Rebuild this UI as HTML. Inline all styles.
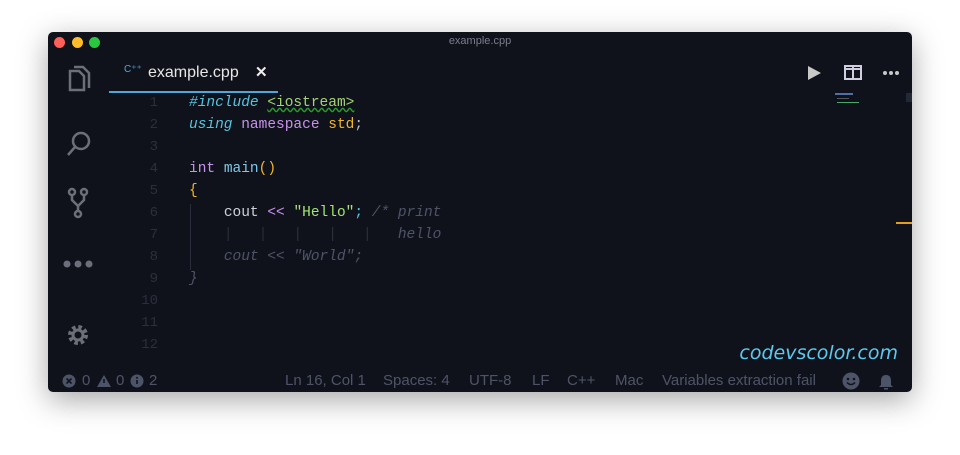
<!DOCTYPE html>
<html><head><meta charset="utf-8"><style>
body{margin:0;width:960px;height:455px;background:#fff;position:relative;overflow:hidden;font-family:"Liberation Sans",sans-serif}
.win{position:absolute;left:48px;top:32px;width:864px;height:360px;background:#10121b;border-radius:5px;box-shadow:0 8px 30px rgba(0,0,0,.35);overflow:hidden}
.dot{position:absolute;top:5px;width:11px;height:11px;border-radius:50%}
.title{position:absolute;top:3px;left:0;right:0;text-align:center;color:#7a7f8c;font-size:11px}
.code{position:absolute;left:141px;top:60px;font-family:"Liberation Mono",monospace;font-size:14.5px;line-height:22px;white-space:pre}
.ln{position:absolute;left:60px;width:50px;text-align:right;color:#2b2f3c;font-family:"Liberation Mono",monospace;font-size:14px;line-height:22px;top:60px;white-space:pre}
.sb{position:absolute;left:0;right:0;bottom:0;height:22px;color:#4e5468;font-size:15px;line-height:22px}
.sb span{position:absolute}
i{font-style:italic}
</style></head><body>
<div class="win">
<div class="dot" style="left:6px;background:#fe5f57"></div>
<div class="dot" style="left:24px;background:#febc2e"></div>
<div class="dot" style="left:41px;background:#28c840"></div>
<div class="title">example.cpp</div>
<svg style="position:absolute;left:14px;top:30px" width="36" height="300" fill="none" stroke="#6b6f7a" stroke-width="2.5">
<path d="M8 9h9l5 5v14H8z M12 5h9l6 6v15"/>
<circle cx="19" cy="79" r="8"/><path d="M13 85l-7 8"/>
<circle cx="10" cy="130" r="3"/><circle cx="22" cy="130" r="3"/><circle cx="16" cy="152" r="3"/><path d="M10 133v5l6 6 6-6v-5M16 144v5"/>
<g fill="#6b6f7a" stroke="none"><circle cx="5" cy="202" r="3.5"/><circle cx="16" cy="202" r="3.5"/><circle cx="27" cy="202" r="3.5"/></g>
<circle cx="16" cy="273" r="8" stroke-width="4" stroke-dasharray="3.5 2.8"/><circle cx="16" cy="273" r="5" stroke-width="3"/>
</svg>
<div style="position:absolute;left:76px;top:32px;color:#4fa6d9;font-size:10px">C⁺⁺</div>
<div style="position:absolute;left:100px;top:32px;color:#e6e6e6;font-size:16px">example.cpp</div>
<div style="position:absolute;left:207px;top:31px;color:#eee;font-size:15px;font-weight:bold">✕</div>
<div style="position:absolute;left:61px;top:59px;width:169px;height:2px;background:#4fa6d9"></div>
<svg style="position:absolute;left:756px;top:32px" width="100" height="18">
<path d="M4 2l13 7-13 7z" fill="#c8c8c8"/><rect x="41" y="2" width="16" height="13" fill="none" stroke="#cfcfe0" stroke-width="2"/><path d="M49 2v13M41 5h16" stroke="#cfcfe0" stroke-width="2"/>
<g fill="#c8c8c8"><circle cx="81" cy="9" r="2"/><circle cx="87" cy="9" r="2"/><circle cx="93" cy="9" r="2"/></g>
</svg>
<div style="position:absolute;left:787px;top:61px;width:18px;height:2px;background:#4f6ea8"></div>
<div style="position:absolute;left:789px;top:66px;width:12px;height:1px;background:#555"></div>
<div style="position:absolute;left:789px;top:70px;width:22px;height:1px;background:#4a6"></div>
<div style="position:absolute;left:858px;top:61px;width:6px;height:9px;background:#232838"></div>
<div style="position:absolute;left:848px;top:190px;width:16px;height:2px;background:#e0a01c"></div>
<div class="ln">1
2
3
4
5
6
7
8
9
10
11
12</div>
<div style="position:absolute;left:142px;top:172px;width:1px;height:66px;background:#2a2e3a"></div>
<div class="code"><span style="color:#56c4e0"><i>#include</i></span> <span style="color:#a3d374;text-decoration:underline wavy #2a9a2a">&lt;iostream&gt;</span>
<i style="color:#56c4e0">using</i> <span style="color:#c792ea">namespace</span> <span style="color:#f0b429">std</span><span style="color:#bbb">;</span>

<span style="color:#c792ea">int</span> <span style="color:#7fc8e8">main</span><span style="color:#f0b429">()</span>
<span style="color:#f0b429">{</span>
    <span style="color:#d0d0d8">cout</span> <span style="color:#c792ea">&lt;&lt;</span> <span style="color:#a3e374">"Hello"</span><span style="color:#56c4e0">;</span> <i style="color:#4e5468">/* print</i>
    <span style="color:#2a2e3a">|   |   |   |   |</span>   <i style="color:#4e5468">hello</i>
    <i style="color:#4e5468">cout &lt;&lt; "World";</i>
<i style="color:#4e5468">}</i></div>
<div style="position:absolute;right:14px;top:310px;color:#5cc8ec;font-family:'Comic Sans MS','DejaVu Sans',cursive;font-size:19px;font-style:italic">codevscolor.com</div>
<div class="sb">
<svg style="position:absolute;left:14px;top:4px" width="100" height="14"><g fill="#4e5468"><circle cx="7" cy="7" r="6.5"/><path d="M42 1l7 12h-14z"/><circle cx="75" cy="7" r="6.5"/></g><path d="M4.5 4.5l5 5M9.5 4.5l-5 5" stroke="#10121b" stroke-width="1.6"/><path d="M42 5v4M75 6v4" stroke="#10121b" stroke-width="1.6"/><circle cx="75" cy="3.8" r="1" fill="#10121b"/></svg>
<span style="left:34px">0</span><span style="left:68px">0</span><span style="left:101px">2</span>
<span style="left:237px">Ln 16, Col 1</span><span style="left:335px">Spaces: 4</span><span style="left:421px">UTF-8</span><span style="left:484px">LF</span><span style="left:519px">C++</span><span style="left:567px">Mac</span><span style="left:614px">Variables extraction fail</span>
<svg style="position:absolute;left:794px;top:2px" width="56" height="18"><circle cx="9" cy="9" r="8.5" fill="#4e5468"/><circle cx="6" cy="7" r="1.3" fill="#10121b"/><circle cx="12" cy="7" r="1.3" fill="#10121b"/><path d="M5 10.5q4 4 8 0" stroke="#10121b" stroke-width="1.5" fill="none"/><path d="M44 3q-5 0-5 6v4l-2 2h14l-2-2v-4q0-6-5-6z M42 16h4v1.5h-4z" fill="#4e5468"/></svg>
</div>
</div>
</body></html>
